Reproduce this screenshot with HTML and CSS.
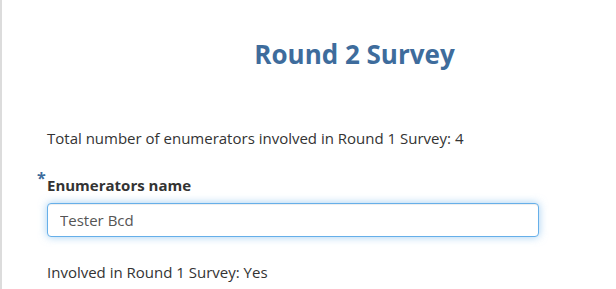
FILE: index.html
```html
<!DOCTYPE html>
<html>
<head>
<meta charset="utf-8">
<link rel="stylesheet" href="styles.css">
</head>
<body>
<div class="page">
  <div class="content">
    <h1 class="title">Round 2 Survey</h1>
    <p class="info total">Total number of enumerators involved in Round 1 Survey: 4</p>
    <div class="field">
      <label class="label"><span class="req">*</span>Enumerators name</label>
      <input class="input" type="text" value="Tester Bcd">
    </div>
    <p class="info involved">Involved in Round 1 Survey: Yes</p>
  </div>
</div>
</body>
</html>
```
FILE: styles.css
```css
html, body {
  margin: 0;
  padding: 0;
  overflow: hidden;
  background: #fff;
}
body {
  font-family: "Open Sans", "DejaVu Sans", sans-serif;
  font-size: 15px;
  color: #333;
}
.page {
  border-left: 2px solid #dcdcdc;
  height: 289px;
  padding-left: 45px;
  overflow: hidden;
}
.content {
  width: 615px;
}
.title {
  margin: 0;
  padding-top: 35px;
  text-align: center;
  font-size: 26px;
  font-weight: 700;
  color: #3e6c9c;
  line-height: 38px;
}
.info {
  margin: 0;
  line-height: 20px;
}
.total {
  margin-top: 55px;
}
.field {
  margin-top: 27px;
}
.label {
  display: block;
  position: relative;
  font-weight: 700;
  line-height: 20px;
  margin-bottom: 8px;
}
.req {
  position: absolute;
  left: -10px;
  top: -7px;
  color: #3e6c9c;
  font-size: 16px;
}
.input {
  display: block;
  box-sizing: border-box;
  width: 492px;
  height: 34px;
  padding: 6px 12px;
  font-family: inherit;
  font-size: 15px;
  color: #555;
  border: 1px solid #66afe9;
  border-radius: 4px;
  outline: none;
  box-shadow: inset 0 1px 1px rgba(0,0,0,.075), 0 0 8px rgba(102,175,233,.6);
}
.involved {
  margin-top: 25px;
}
```
